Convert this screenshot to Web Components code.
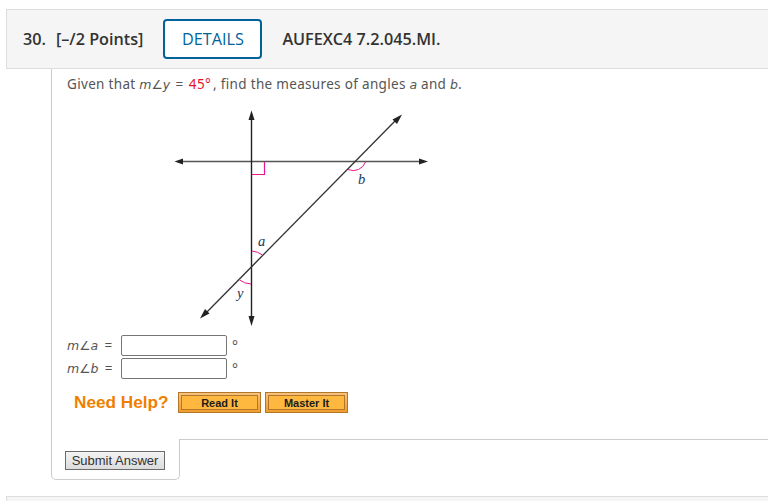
<!DOCTYPE html>
<html lang="en">
<head>
<meta charset="utf-8">
<title>Question 30</title>
<style>
  html, body { margin: 0; height: 501px; overflow: hidden; background: #fff; }
  body { font-family: "Open Sans", "Noto Sans", sans-serif; color: #444; }
</style>
</head>
<body>
<question-card></question-card>
<script>
class QuestionHeader extends HTMLElement {
  constructor() {
    super();
    this.attachShadow({ mode: 'open' });
    this.shadowRoot.innerHTML = `
      <style>
        :host {
          display: flex;
          align-items: center;
          box-sizing: border-box;
          height: 60px;
          margin: 9px -3px 0 6px;
          padding-left: 16px;
          background: #f5f5f5;
          border: 1px solid #ddd;
          font: 600 16.2px "Open Sans", sans-serif;
          color: #333;
        }
        .num { margin-right: 10px; }
        .details {
          box-sizing: border-box;
          width: 99px;
          height: 40px;
          margin: 0 20px;
          display: flex;
          align-items: center;
          justify-content: center;
          background: #fff;
          border: 2px solid #00629b;
          border-radius: 4px;
          color: #00629b;
          font-weight: 500;
        }
      </style>
      <span class="num">30.</span>
      <span>[–/2 Points]</span>
      <span class="details">DETAILS</span>
      <span>AUFEXC4 7.2.045.MI.</span>`;
  }
}

class AngleDiagram extends HTMLElement {
  constructor() {
    super();
    this.attachShadow({ mode: 'open' });
    this.shadowRoot.innerHTML = `
      <style>
        :host { display: block; width: 270px; height: 220px; margin-left: 107px; }
        svg { display: block; }
        text { font: italic 14.5px "Liberation Serif", serif; fill: #22365c; }
      </style>
      <!-- viewBox origin sits at page 174,108 -->
      <svg width="270" height="220" viewBox="174 108 270 220">
        <path d="M180 161.500H422" stroke="#555" stroke-width="1.600" fill="none"/>
        <path d="M251.500 118V320" stroke="#222" stroke-width="1.400" fill="none"/>
        <path d="M205 314L397 119" stroke="#333" stroke-width="1.300" fill="none"/>
        <g fill="#222">
          <path d="M174.500 161.500L183 158.500V164.500Z"/>
          <path d="M428 161.500L419 158.500V164.500Z"/>
          <path d="M251.500 110.500L248.500 120H254.500Z"/>
          <path d="M251.500 326L248.500 316H254.500Z"/>
          <path d="M402 114.500L392.500 119.500L397 124Z"/>
          <path d="M200 318.500L209.500 313.500L205 309Z"/>
        </g>
        <g stroke="#e6188c" fill="none">
          <path d="M252 174.500H264.500V162" stroke-width="1.200"/>
          <path d="M348 169.500A13 13 0 0 0 365.500 162" stroke-width="1"/>
          <path d="M252 251A20 20 0 0 1 262.500 255" stroke-width="1"/>
          <path d="M239 279.500A20 20 0 0 0 251 284" stroke-width="1"/>
        </g>
        <text x="358" y="184">b</text>
        <text x="258" y="246">a</text>
        <text x="237" y="298">y</text>
      </svg>`;
  }
}

class AnswerRow extends HTMLElement {
  constructor() {
    super();
    this.attachShadow({ mode: 'open' });
    this.shadowRoot.innerHTML = `
      <style>
        :host {
          display: flex;
          align-items: center;
          height: 23px;
          font: 13.5px "Noto Sans", sans-serif;
          color: #555;
        }
        .label { width: 54px; white-space: pre; margin-top: -1px; }
        i { font-family: "DejaVu Sans", sans-serif; font-size: 12.5px; margin-right: 3px; }
        .box {
          box-sizing: border-box;
          width: 106px;
          height: 21px;
          background: #fff;
          border: 1px solid #767676;
          border-radius: 2px;
        }
        .deg { margin-left: 5px; font-size: 14px; }
      </style>
      <span class="label"><i>m∠<slot></slot></i> =</span>
      <span class="box"></span>
      <span class="deg">°</span>`;
  }
}

class HelpButton extends HTMLElement {
  constructor() {
    super();
    this.attachShadow({ mode: 'open' });
    this.shadowRoot.innerHTML = `
      <style>
        :host {
          display: block;
          box-sizing: border-box;
          width: 83px;
          height: 21px;
          padding: 3px;
          background: linear-gradient(#f6c27f, #f39c2c);
          border: 1px solid #b3772a;
        }
        div {
          box-sizing: border-box;
          height: 13px;
          display: flex;
          align-items: center;
          justify-content: center;
          background: #ffb83f;
          outline: 1px solid #b3772a;
          font: bold 11px "Liberation Sans", sans-serif;
          color: #1c1c1c;
        }
      </style>
      <div><slot></slot></div>`;
  }
}

class QuestionBody extends HTMLElement {
  constructor() {
    super();
    this.attachShadow({ mode: 'open' });
    this.shadowRoot.innerHTML = `
      <style>
        :host { display: block; margin-left: 51px; }
        .main {
          box-sizing: border-box;
          height: 370px;
          padding: 6px 0 0 15px;
          border-left: 1px solid #ccc;
        }
        .prompt {
          font: 13.5px "Noto Sans", sans-serif;
          letter-spacing: 0.32px;
          color: #555;
          height: 18px;
          line-height: 18px;
          white-space: pre;
        }
        .prompt i { font-family: "DejaVu Sans", sans-serif; font-size: 12.5px; letter-spacing: 0; }
        .eq { margin: 0 1.5px; }
        .red { color: #e8112d; margin-right: 2px; }
        angle-diagram { margin-top: 15px; }
        .answers { margin-top: 6px; }
        .help { display: flex; align-items: center; gap: 4px; margin-top: 12px; }
        .help span {
          font: bold 17.2px "Liberation Sans", sans-serif;
          white-space: nowrap;
          color: #ef7f00;
          margin-left: 7px;
          width: 100px;
        }
        .foot { display: flex; }
        .tab {
          box-sizing: border-box;
          width: 129px;
          height: 41px;
          padding: 12px 0 0 13px;
          border: 1px solid #ccc;
          border-top: 0;
          border-radius: 0 0 5px 5px;
        }
        .rest { flex: 1; border-top: 1px solid #ccc; }
        button {
          display: block;
          box-sizing: border-box;
          width: 100px;
          height: 19px;
          padding: 0;
          font: 13px "Liberation Sans", sans-serif;
          color: #333;
          background: linear-gradient(#f3f3f3, #dcdcdc);
          border: 1px solid #6a6a6a;
          border-radius: 0;
        }
      </style>
      <div class="main">
        <div class="prompt">Given that <i>m∠y</i> <span class="eq">=</span> <span class="red">45°</span>, find the measures of angles <i>a</i> and <i>b</i>.</div>
        <angle-diagram></angle-diagram>
        <div class="answers">
          <answer-row>a</answer-row>
          <answer-row>b</answer-row>
        </div>
        <div class="help">
          <span>Need Help?</span>
          <help-button>Read It</help-button>
          <help-button>Master It</help-button>
        </div>
      </div>
      <div class="foot">
        <div class="tab"><button type="button">Submit Answer</button></div>
        <div class="rest"></div>
      </div>`;
  }
}

class QuestionCard extends HTMLElement {
  constructor() {
    super();
    this.attachShadow({ mode: 'open' });
    this.shadowRoot.innerHTML = `
      <style>
        :host { display: block; }
        .next {
          height: 12px;
          margin: 16px -3px 0 6px;
          background: #f5f5f5;
          border: 1px solid #ddd;
        }
      </style>
      <question-header></question-header>
      <question-body></question-body>
      <div class="next"></div>`;
  }
}

customElements.define('question-header', QuestionHeader);
customElements.define('angle-diagram', AngleDiagram);
customElements.define('answer-row', AnswerRow);
customElements.define('help-button', HelpButton);
customElements.define('question-body', QuestionBody);
customElements.define('question-card', QuestionCard);
</script>
</body>
</html>
